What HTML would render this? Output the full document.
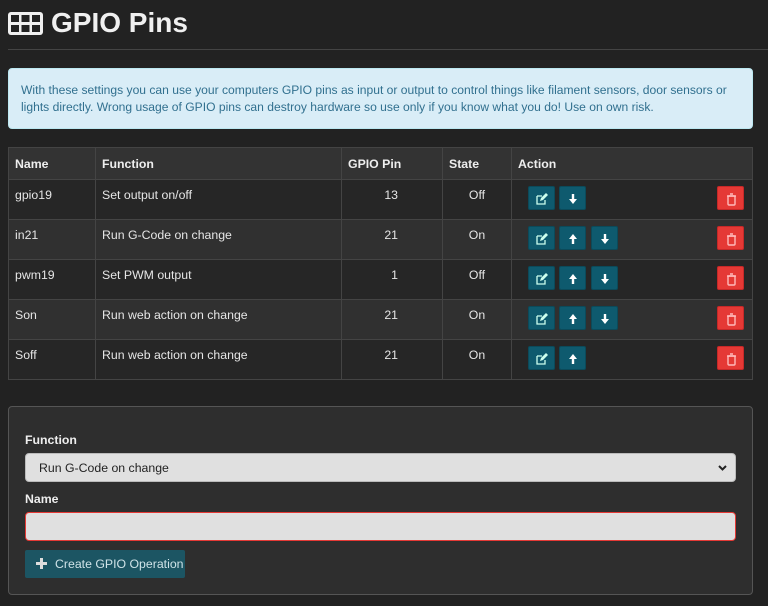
<!DOCTYPE html>
<html><head><style>
*{box-sizing:border-box;margin:0;padding:0}
body{width:768px;height:606px;background:#222;font-family:"Liberation Sans",Arial,sans-serif;position:relative;overflow:hidden;color:#ddd}
.a{position:absolute}
h1{position:absolute;left:51px;top:7px;font-size:28px;font-weight:bold;color:#f0f0f0}
.hr{left:8px;top:49px;width:760px;height:1px;background:#444}
.info{left:8px;top:68px;width:745px;height:61px;background:#d9edf7;border:1px solid #bce8f1;border-radius:4px;color:#31708f;font-size:12.1px;line-height:17px;padding:13px 12px;white-space:nowrap;overflow:hidden}
table{position:absolute;left:8px;top:147px;width:745px;border-collapse:collapse;font-size:12.3px}
td,th{border:1px solid #444;vertical-align:top;text-align:left;padding:8px 6px 0 6px}
th{height:32px;background:#333;font-weight:bold;color:#eee;padding-top:9px}
td{height:40px;color:#e6e6e6}
tr.o td{background:#262626}
tr.e td{background:#303030}
.r{text-align:right;padding-right:44px}
.c{text-align:center}
.b{position:absolute;width:27px;height:24px;background:#0e5a6e;border:1px solid #0b4a5a;border-radius:2px;top:7px}
.b svg{position:absolute;left:7px;top:6px}
.d{background:#e53935;border-color:#c62828}
.panel{left:8px;top:406px;width:745px;height:189px;background:#2e2e2e;border:1px solid #555;border-radius:4px}
.lab{font-size:12.3px;font-weight:bold;color:#eee}
.sel{left:25px;top:453px;width:711px;height:29px;background:#e0e0e0;border:1px solid #bbb;border-radius:4px;color:#222;font-size:12.3px;padding:7px 13px}
.inp{left:25px;top:512px;width:711px;height:29px;background:#e0e0e0;border:1.5px solid #e53935;border-radius:4px}
.btn{left:25px;top:550px;width:160px;height:28px;background:#1c5563;border-radius:2px;color:#cfe3e8;font-size:12.3px;line-height:28px;padding-left:30px}
</style></head><body>
<svg class="a" style="left:8px;top:12px" width="35" height="23" viewBox="0 0 35 23"><rect x="0" y="0" width="35" height="23" rx="3" fill="#f0f0f0"/><g fill="#222"><rect x="3" y="3" width="8" height="7"/><rect x="13.5" y="3" width="8" height="7"/><rect x="24" y="3" width="8" height="7"/><rect x="3" y="13" width="8" height="7"/><rect x="13.5" y="13" width="8" height="7"/><rect x="24" y="13" width="8" height="7"/></g></svg>
<h1>GPIO Pins</h1>
<div class="a hr"></div>
<div class="a info">With these settings you can use your computers GPIO pins as input or output to control things like filament sensors, door sensors or<br>lights directly. Wrong usage of GPIO pins can destroy hardware so use only if you know what you do! Use on own risk.</div>
<table>
<tr><th style="width:87px">Name</th><th style="width:246px">Function</th><th style="width:101px">GPIO Pin</th><th style="width:69px">State</th><th>Action</th></tr>
<tr class="o"><td>gpio19</td><td>Set output on/off</td><td class="r">13</td><td class="c">Off</td><td></td></tr>
<tr class="e"><td>in21</td><td>Run G-Code on change</td><td class="r">21</td><td class="c">On</td><td></td></tr>
<tr class="o"><td>pwm19</td><td>Set PWM output</td><td class="r">1</td><td class="c">Off</td><td></td></tr>
<tr class="e"><td>Son</td><td>Run web action on change</td><td class="r">21</td><td class="c">On</td><td></td></tr>
<tr class="o"><td>Soff</td><td>Run web action on change</td><td class="r">21</td><td class="c">On</td><td></td></tr>
</table>
<svg width="0" height="0" style="position:absolute"><defs>
<g id="ed"><path d="M1 3h5M1 3v8h8V7" stroke="#cfe" stroke-width="1.3" fill="none"/><path d="M4 8l1-3 5-5 2 2-5 5z" fill="#cfe"/></g>
<g id="dn"><path d="M6 1v8" stroke="#fff" stroke-width="2.4"/><path d="M2 6l4 5 4-5z" fill="#fff"/></g>
<g id="up"><path d="M6 11V3" stroke="#fff" stroke-width="2.4"/><path d="M2 6l4-5 4 5z" fill="#fff"/></g>
<g id="tr"><rect x="3" y="3" width="7" height="9" rx="1" fill="none" stroke="#fbb" stroke-width="1.4"/><path d="M2 3h9M5 1h3" stroke="#fbb" stroke-width="1.4"/></g>
</defs></svg>
<div class="a" style="left:0;top:179px">
<div class="b" style="left:528px"><svg width="13" height="12"><use href="#ed"/></svg></div><div class="b" style="left:559px"><svg width="13" height="12"><use href="#dn"/></svg></div><div class="b d" style="left:717px"><svg width="13" height="13"><use href="#tr"/></svg></div></div>
<div class="a" style="left:0;top:219px">
<div class="b" style="left:528px"><svg width="13" height="12"><use href="#ed"/></svg></div><div class="b" style="left:559px"><svg width="13" height="12"><use href="#up"/></svg></div><div class="b" style="left:591px"><svg width="13" height="12"><use href="#dn"/></svg></div><div class="b d" style="left:717px"><svg width="13" height="13"><use href="#tr"/></svg></div></div>
<div class="a" style="left:0;top:259px">
<div class="b" style="left:528px"><svg width="13" height="12"><use href="#ed"/></svg></div><div class="b" style="left:559px"><svg width="13" height="12"><use href="#up"/></svg></div><div class="b" style="left:591px"><svg width="13" height="12"><use href="#dn"/></svg></div><div class="b d" style="left:717px"><svg width="13" height="13"><use href="#tr"/></svg></div></div>
<div class="a" style="left:0;top:299px">
<div class="b" style="left:528px"><svg width="13" height="12"><use href="#ed"/></svg></div><div class="b" style="left:559px"><svg width="13" height="12"><use href="#up"/></svg></div><div class="b" style="left:591px"><svg width="13" height="12"><use href="#dn"/></svg></div><div class="b d" style="left:717px"><svg width="13" height="13"><use href="#tr"/></svg></div></div>
<div class="a" style="left:0;top:339px">
<div class="b" style="left:528px"><svg width="13" height="12"><use href="#ed"/></svg></div><div class="b" style="left:559px"><svg width="13" height="12"><use href="#up"/></svg></div><div class="b d" style="left:717px"><svg width="13" height="13"><use href="#tr"/></svg></div></div>
<div class="a panel"></div>
<div class="a lab" style="left:25px;top:433px">Function</div>
<div class="a sel">Run G-Code on change<svg style="position:absolute;right:8px;top:11px" width="9" height="6"><path d="M1 1l3.5 3.5L8 1" stroke="#222" stroke-width="2" fill="none"/></svg></div>
<div class="a lab" style="left:25px;top:492px">Name</div>
<div class="a inp"></div>
<div class="a btn"><svg style="position:absolute;left:10px;top:7px" width="13" height="13"><path d="M6.5 1v11M1 6.5h11" stroke="#ddd" stroke-width="3"/></svg>Create GPIO Operation</div>
</body></html>
